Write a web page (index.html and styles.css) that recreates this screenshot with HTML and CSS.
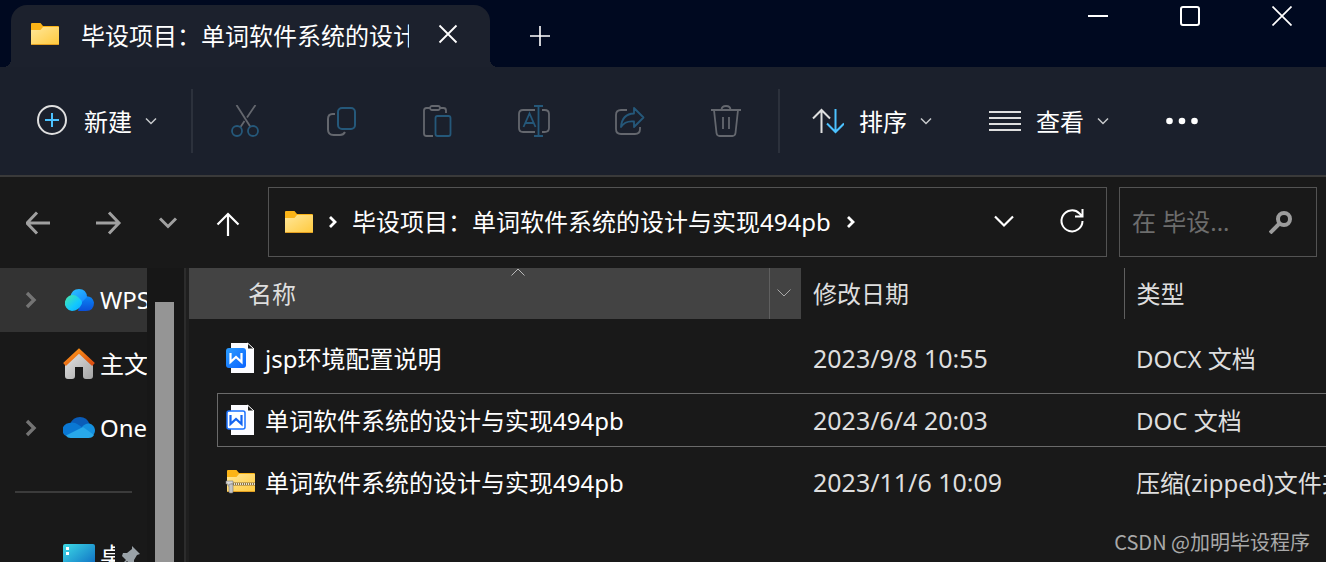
FILE: index.html
```html
<!DOCTYPE html>
<html lang="zh-CN">
<head>
  <meta charset="UTF-8">
  <meta name="viewport" content="width=device-width, initial-scale=1.0">
  <title>毕设项目</title>
  <link rel="stylesheet" href="styles.css">
</head>
<body>
  <svg class="defs" width="0" height="0" aria-hidden="true">
    <defs>
      <linearGradient id="folderFill" x1="0" y1="0" x2="1" y2="1">
        <stop offset="0" stop-color="#ffe79a"/><stop offset="1" stop-color="#ffc93c"/>
      </linearGradient>
      <linearGradient id="blueFill" x1="0" y1="0" x2="1" y2="1">
        <stop offset="0" stop-color="#2b9dff"/><stop offset="1" stop-color="#0a63ff"/>
      </linearGradient>
      <linearGradient id="wpsLeft" x1="0" y1="0" x2="1" y2="1">
        <stop offset="0" stop-color="#4be8a4"/><stop offset="0.6" stop-color="#12c8ff"/><stop offset="1" stop-color="#0aa8ff"/>
      </linearGradient>
      <linearGradient id="wpsTop" x1="0" y1="0" x2="1" y2="1">
        <stop offset="0" stop-color="#2cc4ff"/><stop offset="1" stop-color="#1583ff"/>
      </linearGradient>
      <linearGradient id="wpsRight" x1="0" y1="0" x2="0" y2="1">
        <stop offset="0" stop-color="#0a86f5"/><stop offset="1" stop-color="#0a4fd8"/>
      </linearGradient>
      <linearGradient id="wall" x1="0" y1="0" x2="1" y2="1">
        <stop offset="0" stop-color="#e6e6e6"/><stop offset="1" stop-color="#a4a4a4"/>
      </linearGradient>
      <linearGradient id="roof" x1="0" y1="0" x2="1" y2="1">
        <stop offset="0" stop-color="#ff9a1a"/><stop offset="1" stop-color="#d94a10"/>
      </linearGradient>
      <linearGradient id="desk" x1="0" y1="0" x2="1" y2="1">
        <stop offset="0" stop-color="#3ddbe6"/><stop offset="1" stop-color="#0a63c0"/>
      </linearGradient>
      <symbol id="folder" viewBox="0 0 28 23">
        <path d="M0 1a1 1 0 0 1 1-1h8.500l2.500 3h15a1 1 0 0 1 1 1v5H0z" fill="#fbb417"/>
        <path d="M0 7h9.500L12 4h15.500l.5.5V21a1 1 0 0 1-1 1H1a1 1 0 0 1-1-1z" fill="url(#folderFill)"/>
        <path d="M.5 21.500h27" stroke="#e5a021"/>
      </symbol>
      <symbol id="chevron" viewBox="0 0 14 14">
        <path d="M2 4.500l5 5 5-5" fill="none" stroke="#c8cacd" stroke-width="1.500"/>
      </symbol>
      <symbol id="crumb" viewBox="0 0 12 14">
        <path d="M3 2l5 5-5 5" fill="none" stroke="#fff" stroke-width="2.800"/>
      </symbol>
      <symbol id="expand" viewBox="0 0 14 20">
        <path d="M3 3l7 7-7 7" fill="none" stroke="#747474" stroke-width="3.400"/>
      </symbol>
    </defs>
  </svg>

  <header class="title-bar">
    <div class="tab">
      <svg class="folder" width="28" height="23"><use href="#folder"/></svg>
      <span class="tab-title">毕设项目：单词软件系统的设计与实现</span>
      <button class="icon-button" aria-label="关闭标签页">
        <svg width="20" height="20" fill="none" stroke="#fff" stroke-width="1.800"><path d="M1.500 1.500l17 17M18.500 1.500l-17 17"/></svg>
      </button>
    </div>
    <button class="icon-button new-tab" aria-label="新标签页">
      <svg width="20" height="20" fill="none" stroke="#fff" stroke-width="1.600"><path d="M10 0v20M0 10h20"/></svg>
    </button>
    <div class="window-buttons">
      <button class="icon-button" aria-label="最小化">
        <svg width="20" height="20" fill="none" stroke="#fff" stroke-width="2"><path d="M0 10h20"/></svg>
      </button>
      <button class="icon-button" aria-label="最大化">
        <svg width="20" height="20" fill="none" stroke="#fff" stroke-width="2"><rect x="1" y="1" width="18" height="18" rx="2"/></svg>
      </button>
      <button class="icon-button" aria-label="关闭">
        <svg width="20" height="20" fill="none" stroke="#fff" stroke-width="1.700"><path d="M.5.5l19 19M19.500.5l-19 19"/></svg>
      </button>
    </div>
  </header>

  <div class="toolbar">
    <button class="menu-button">
      <svg width="32" height="32" fill="none"><circle cx="15" cy="15" r="14" stroke="#dfdfdf" stroke-width="2"/><path d="M15 8v14M8 15h14" stroke="#4cc2ff" stroke-width="2"/></svg>
      <span>新建</span>
      <svg class="chevron" width="14" height="14"><use href="#chevron"/></svg>
    </button>
    <div class="divider"></div>
    <button class="tool-button" aria-label="剪切" disabled>
      <svg width="32" height="32" fill="none" stroke-width="1.800"><path d="M6.500 0l14 22M25.500 0L17 12.500M14.500 16l-4 6" stroke="#64676e"/><g stroke="#25587a"><circle cx="7" cy="26" r="5"/><circle cx="23" cy="26" r="5"/></g></svg>
    </button>
    <button class="tool-button" aria-label="复制" disabled>
      <svg width="32" height="32" fill="none" stroke-width="2"><path d="M9 9H6.500Q2 9 2 14v10.500Q2 30 7.500 30H14q3.500 0 5-3" stroke="#64676e"/><rect x="12" y="3" width="17" height="21" rx="4" stroke="#25587a"/></svg>
    </button>
    <button class="tool-button" aria-label="粘贴" disabled>
      <svg width="32" height="32" fill="none" stroke-width="1.800"><path d="M8 3H4.500Q2 3 2 5.500v23Q2 31 4.500 31H11M18 3h3.500Q24 3 24 5.500V8" stroke="#64676e"/><rect x="8" y="1" width="10" height="4" rx="2" stroke="#64676e"/><rect x="13.500" y="11" width="15" height="20" rx="2" stroke="#25587a"/></svg>
    </button>
    <button class="tool-button" aria-label="重命名" disabled>
      <svg width="32" height="32" fill="none" stroke-width="1.800"><path d="M17 5H5Q1 5 1 9v14q0 4 4 4h12M24 5h2.500q4.500 0 4.500 4v14q0 4-4.500 4H24" stroke="#64676e"/><path d="M5.500 22l6-13.500 6 13.500M7.500 18h8M16 1h9M16 31h9M20.500 1v30" stroke="#25587a"/></svg>
    </button>
    <button class="tool-button" aria-label="共享" disabled>
      <svg width="32" height="32" fill="none" stroke-width="1.800"><path d="M13 5H7Q2 5 2 10v14q0 5 5 5h14q5 0 5-5v-2" stroke="#64676e"/><path d="M20 3l9.500 9.500L20 22v-5.500Q11 15.500 7 22 8 9 20 8.500z" stroke="#25587a" stroke-linejoin="round"/></svg>
    </button>
    <button class="tool-button" aria-label="删除" disabled>
      <svg width="32" height="32" fill="none" stroke="#64676e" stroke-width="1.800"><path d="M1 5h30M11.500 5q0-4 4.500-4t4.500 4M4 5l2.500 23q.4 3 3 3h13q2.600 0 3-3L28 5M13 12v12M19 12v12"/></svg>
    </button>
    <div class="divider"></div>
    <button class="menu-button">
      <svg width="32" height="32" fill="none" stroke-width="2"><path d="M9.500 28V5M1 13.500L9.500 5l8.500 8.500" stroke="#dfdfdf"/><path d="M23.500 4v23M15 18.500l8.500 8.500 8.500-8.500" stroke="#4cc2ff"/></svg>
      <span>排序</span>
      <svg class="chevron" width="14" height="14"><use href="#chevron"/></svg>
    </button>
    <button class="menu-button">
      <svg width="32" height="32" fill="none" stroke="#dfdfdf" stroke-width="2"><path d="M0 7h32M0 13h32M0 19h32M0 25h32"/></svg>
      <span>查看</span>
      <svg class="chevron" width="14" height="14"><use href="#chevron"/></svg>
    </button>
    <button class="menu-button" aria-label="查看更多">
      <svg width="32" height="32" fill="#fff"><circle cx="3.500" cy="16" r="3.300"/><circle cx="16" cy="16" r="3.300"/><circle cx="28.500" cy="16" r="3.300"/></svg>
    </button>
  </div>

  <nav class="nav-bar">
    <div class="nav-buttons">
      <button class="icon-button" aria-label="返回">
        <svg width="28" height="28" fill="none" stroke="#a0a0a0" stroke-width="3"><path d="M24 15H1M11 4.500L1 15l10 10.500"/></svg>
      </button>
      <button class="icon-button" aria-label="前进">
        <svg width="28" height="28" fill="none" stroke="#a0a0a0" stroke-width="3"><path d="M2 15h23M15 4.500L25 15 15 25.500"/></svg>
      </button>
      <button class="icon-button" aria-label="最近浏览的位置">
        <svg width="28" height="28" fill="none" stroke="#a0a0a0" stroke-width="3"><path d="M6 10.500l8 8 8-8"/></svg>
      </button>
      <button class="icon-button" aria-label="向上">
        <svg width="28" height="28" fill="none" stroke="#fff" stroke-width="2.200"><path d="M14 28V6M3.500 16.500L14 6l10.500 10.500"/></svg>
      </button>
    </div>
    <div class="address">
      <svg class="folder" width="28" height="23"><use href="#folder"/></svg>
      <svg class="crumb" width="12" height="14"><use href="#crumb"/></svg>
      <a class="address-text" href="#">毕设项目：单词软件系统的设计与实现494pb</a>
      <svg class="crumb" width="12" height="14"><use href="#crumb"/></svg>
      <div class="address-buttons">
        <button class="icon-button" aria-label="以前的位置">
          <svg width="28" height="28" fill="none" stroke="#fff" stroke-width="2.200"><path d="M5 8.500l9 9 9-9"/></svg>
        </button>
        <button class="icon-button" aria-label="刷新">
          <svg width="28" height="28" fill="none" stroke="#fff" stroke-width="2"><path d="M24.500 13A10.500 10.500 0 1 1 21.500 5.500l2.500 2.500M24.500 1v7.500h-7.500"/></svg>
        </button>
      </div>
    </div>
    <form class="search">
      <input type="text" aria-label="搜索" placeholder="在 毕设...">
      <button class="icon-button" type="button" aria-label="开始搜索">
        <svg width="24" height="24" fill="none" stroke="#9c9c9c" stroke-width="4"><circle cx="15" cy="9" r="6"/><path d="M10.500 13.500L1 23"/></svg>
      </button>
    </form>
  </nav>

  <main class="content">
    <aside class="sidebar">
      <ul class="tree">
        <li class="tree-item active">
          <svg class="expand" width="14" height="20"><use href="#expand"/></svg>
          <svg class="tree-icon" width="32" height="32"><path d="M15 27l4-14q10-3 12 5.500 0 8.500-8 8.500z" fill="url(#wpsRight)"/><path d="M7.500 13Q8.500 5 16 5t8 8l-6 6-7-5z" fill="url(#wpsTop)"/><path d="M9 27a8 8 0 1 1 3.500-15.500q3 1.500 5 4 2.500 2.500 1 5-3 6.500-9.500 6.500z" fill="url(#wpsLeft)"/></svg>
          <span>WPS云盘</span>
        </li>
        <li class="tree-item">
          <span class="expand"></span>
          <svg class="tree-icon" width="32" height="32"><path d="M2 14L16 3l14 11v14q0 3-3 3h-4q-3 0-3-3v-9h-8v9q0 3-3 3H5q-3 0-3-3z" fill="url(#wall)"/><path d="M1.500 16.500L16 3l14.500 13.500" fill="none" stroke="url(#roof)" stroke-width="4"/></svg>
          <span>主文件夹</span>
        </li>
        <li class="tree-item">
          <svg class="expand" width="14" height="20"><use href="#expand"/></svg>
          <svg class="tree-icon" width="32" height="32"><path d="M7 12q3-7 10-7 7 0 9.500 7L16 19z" fill="#0a5cb8"/><path d="M7 25a7 7 0 0 1-1-14q5-1.500 9 1.500l6 4L8 25z" fill="#0a78d4"/><path d="M19 15q3-4 7.500-3.500 5 1.500 5.500 6.500 0 4-3 6z" fill="#1490df"/><path d="M3 23.500L20 15l11 8q-1.500 3-5.500 3h-18q-3 0-4.500-2.500z" fill="#28a8ea"/></svg>
          <span>OneDrive</span>
        </li>
      </ul>
      <hr class="tree-divider">
      <ul class="tree">
        <li class="tree-item">
          <span class="expand"></span>
          <svg class="tree-icon" width="32" height="32"><rect y="4" width="32" height="26" rx="2" fill="url(#desk)"/><path d="M3 7h3v3H3zM3 12h3v3H3z" fill="#fff"/></svg>
          <span class="pinned-name">桌面</span>
          <svg class="pin" width="20" height="28" fill="#9aa2a8"><path d="M11 4l8 8-3 1-3 5v4l-3 1-4-4-5 5-1-1 5-5-4-4 1-3h4l5-4z"/></svg>
        </li>
      </ul>
    </aside>
    <div class="scrollbar"><div class="thumb"></div></div>
    <div class="splitter"></div>

    <section class="files">
      <table>
        <colgroup>
          <col class="col-name">
          <col class="col-date">
          <col>
        </colgroup>
        <thead>
          <tr>
            <th class="name-head">
              <div class="head-cell">
                <span class="head-name">名称</span>
                <svg class="sort-mark" width="14" height="8" fill="none" stroke="#b9b9b9"><path d="M.5 7.500L7 1l6.500 6.500"/></svg>
                <button class="icon-button filter" aria-label="筛选">
                  <svg width="18" height="10" fill="none" stroke="#a9a9a9"><path d="M.5.5L7 7 13.500.5"/></svg>
                </button>
              </div>
            </th>
            <th class="date-head">修改日期</th>
            <th>类型</th>
          </tr>
        </thead>
        <tbody>
          <tr>
            <td class="name">
              <div class="cell">
                <svg width="30" height="32"><path d="M6 1h16.500L29 7v24H6z" fill="#fcfcff"/><path d="M22.500 1v6H29z" fill="#1b1b1b" stroke="#fff"/><rect x="1" y="6" width="20" height="20" rx="3" fill="url(#blueFill)"/><path d="M5.500 11v9l5.500-5 5.500 5v-9" fill="none" stroke="#fff" stroke-width="2.200"/></svg>
                <span>jsp环境配置说明</span>
              </div>
            </td>
            <td class="date"><div class="cell">2023/9/8 10:55</div></td>
            <td><div class="cell">DOCX 文档</div></td>
          </tr>
          <tr class="focused">
            <td class="name">
              <div class="cell">
                <svg width="30" height="32"><path d="M6 1h16.500L29 7v24H6z" fill="#fcfcff"/><path d="M22.500 1v6H29z" fill="#1b1b1b" stroke="#fff"/><rect x="2" y="7" width="18" height="18" rx="2" fill="#fff" stroke="#1a72ff" stroke-width="1.500"/><path d="M5.500 11v9l5.500-5 5.500 5v-9" fill="none" stroke="#1565f0" stroke-width="2.200"/></svg>
                <span>单词软件系统的设计与实现494pb</span>
              </div>
            </td>
            <td class="date"><div class="cell">2023/6/4 20:03</div></td>
            <td><div class="cell">DOC 文档</div></td>
          </tr>
          <tr>
            <td class="name">
              <div class="cell">
                <svg width="30" height="32"><svg x="2" y="4" width="28" height="23"><use href="#folder"/></svg><path d="M7 18h23" stroke="#8c7340" stroke-width="3"/><path d="M7 18h23" stroke="#e6e0d0" stroke-width="2" stroke-dasharray="1 1"/><path d="M1 15h7v3H6v2H3v-2H1z" fill="#d8d8d8" stroke="#777" stroke-width=".6"/><rect x="4" y="18" width="4" height="9" rx="1" fill="#c4c4c4" stroke="#777" stroke-width=".6"/></svg>
                <span>单词软件系统的设计与实现494pb</span>
              </div>
            </td>
            <td class="date"><div class="cell">2023/11/6 10:09</div></td>
            <td><div class="cell">压缩(zipped)文件夹</div></td>
          </tr>
        </tbody>
      </table>
    </section>
  </main>
  <div class="watermark">CSDN @加明毕设程序</div>
</body>
</html>
```

FILE: styles.css
```css
* {
  box-sizing: border-box;
  margin: 0;
  padding: 0;
}

body {
  background: #191919;
  color: #fff;
  font-family: "Noto Sans", "Noto Sans CJK SC", sans-serif;
  font-size: 24px;
  line-height: 32px;
  display: flex;
  flex-direction: column;
  height: 100vh;
  overflow: hidden;
  position: relative;
}

.defs {
  position: absolute;
}

svg {
  display: block;
  flex: none;
}

button,
input {
  background: none;
  border: 0;
  color: inherit;
  font: inherit;
}

.icon-button {
  display: flex;
  align-items: center;
  justify-content: center;
  width: 32px;
  height: 32px;
  flex: none;
}

/* title bar */
.title-bar {
  display: flex;
  align-items: flex-start;
  background: #000920;
  padding: 5px 28px 0 11px;
}

.tab {
  display: flex;
  align-items: center;
  width: 479px;
  height: 62px;
  padding: 0 26px 4px 20px;
  background: #1c212d;
  border-radius: 16px 16px 0 0;
  position: relative;
}

.tab::before,
.tab::after {
  content: "";
  position: absolute;
  bottom: 0;
  width: 8px;
  height: 8px;
}

.tab::before {
  right: 100%;
  background: radial-gradient(circle at 0 0, #000920 8px, #1c212d 8px);
}

.tab::after {
  left: 100%;
  background: radial-gradient(circle at 100% 0, #000920 8px, #1c212d 8px);
}

.tab-title {
  flex: 1;
  margin: 4px 23px 0 22px;
  overflow: hidden;
  white-space: nowrap;
}

.new-tab {
  margin: 15px 0 0 34px;
}

.window-buttons {
  display: flex;
  gap: 60px;
  margin: -5px 0 0 auto;
}

/* command bar */
.toolbar {
  display: flex;
  align-items: center;
  height: 110px;
  padding-left: 9px;
  background: #1b202c;
  border-bottom: 2px solid #3a3a3a;
}

.menu-button {
  display: flex;
  align-items: center;
  height: 64px;
  padding: 0 28px;
}

.menu-button span {
  margin: 2px 12px 0 15px;
  white-space: nowrap;
}

.divider {
  width: 2px;
  height: 64px;
  margin: 0 4px 0 5px;
  background: #2c313c;
}

.tool-button {
  display: flex;
  align-items: center;
  justify-content: center;
  width: 96px;
  height: 64px;
  padding-left: 2px;
}

/* navigation row */
.nav-bar {
  display: flex;
  gap: 10px;
  padding: 10px 9px 11px 10px;
}

.nav-buttons {
  display: flex;
  align-items: center;
}

.nav-buttons .icon-button {
  width: 60px;
}

.nav-buttons .icon-button:first-child {
  margin-right: 8px;
}

.address,
.search {
  display: flex;
  align-items: center;
  height: 70px;
  border: 1px solid #535353;
}

.address {
  flex: 1;
  min-width: 0;
  padding: 0 18px 0 16px;
}

.crumb {
  margin: 0 13px 0 14px;
}

.address-text {
  color: #fff;
  text-decoration: none;
  white-space: nowrap;
  overflow: hidden;
}

.address-buttons {
  display: flex;
  gap: 36px;
  margin-left: auto;
}

.search {
  width: 198px;
  margin-left: 2px;
  padding: 0 19px 0 12px;
}

.search input {
  flex: 1;
  min-width: 0;
  outline: none;
}

.search input::placeholder {
  color: #6d6d6d;
  opacity: 1;
}

/* folder tree */
.content {
  display: flex;
  flex: 1;
  min-height: 0;
}

.sidebar {
  width: 147px;
  flex: none;
  overflow: hidden;
}

.tree {
  list-style: none;
}

.tree-item {
  display: flex;
  align-items: center;
  height: 64px;
  padding-left: 24px;
  white-space: nowrap;
}

.tree-item.active {
  background: #333;
}

.expand {
  width: 14px;
  flex: none;
}

.tree-icon {
  margin: 0 5px 0 25px;
}

.tree-divider {
  height: 2px;
  margin: 31px 15px;
  border: 0;
  background: #3b3b3b;
}

.pinned-name {
  width: 15px;
  overflow: hidden;
}

.pin {
  margin-left: 6px;
}

.scrollbar {
  display: flex;
  width: 35px;
  flex: none;
  padding: 34px 8px 0;
  background: #171717;
}

.thumb {
  flex: 1;
  background: #959595;
}

.splitter {
  width: 7px;
  flex: none;
  background: #1f1f1f;
  border-left: 2px solid #171717;
  box-shadow: inset 2px 0 #2c2c2c;
}

/* file list */
.files {
  flex: 1;
  min-width: 0;
  overflow: hidden;
}

table {
  width: 100%;
  table-layout: fixed;
  border-collapse: collapse;
}

.col-name {
  width: 612px;
}

.col-date {
  width: 323px;
}

th {
  height: 51px;
  padding-left: 12px;
  color: #dedede;
  font-weight: 400;
  text-align: left;
}

.name-head {
  padding: 0;
  background: #434343;
}

.date-head {
  border-right: 1px solid #5f5f5f;
}

.head-cell {
  display: flex;
  align-items: center;
  height: 51px;
  padding-left: 59px;
  position: relative;
}

.sort-mark {
  position: absolute;
  top: 0;
  left: 322px;
}

.filter {
  height: 51px;
  margin-left: auto;
  border-left: 1px solid #5f5f5f;
}

tbody::before {
  content: "";
  display: block;
  height: 8px;
}

td {
  padding: 4px 0;
  color: #dedede;
}

.cell {
  display: flex;
  align-items: center;
  height: 54px;
  padding: 2px 0 0 12px;
  border: 1px solid transparent;
  border-width: 1px 0;
  white-space: nowrap;
}

.name .cell {
  gap: 10px;
  margin-left: 28px;
  padding-left: 7px;
  border-left-width: 1px;
  color: #fff;
}

.cell svg {
  margin-bottom: 2px;
}

.date .cell {
  padding-top: 0;
  font-size: 25px;
}

.focused .cell {
  border-color: #6a6a6a;
}

.watermark {
  position: absolute;
  right: 16px;
  bottom: 4px;
  color: #a9a9a9;
  font-family: "Noto Sans CJK SC", sans-serif;
  font-size: 20px;
}
```
